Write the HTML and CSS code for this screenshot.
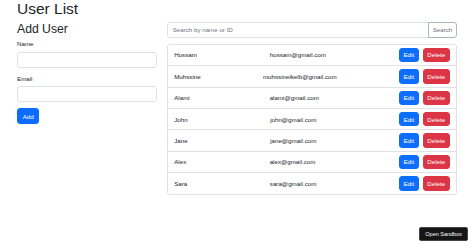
FILE: index.html
```html
<!DOCTYPE html>
<html lang="en">
<head>
    <meta charset="UTF-8">
    <meta name="viewport" content="width=device-width, initial-scale=1.0">
    <title>User List</title>
    <link rel="stylesheet" href="styles.css">
</head>
<body>
    <div class="container">
        <h1>User List</h1>
        <div class="row">
            <div class="col-left">
                <h2>Add User</h2>
                <form id="addForm">
                    <div class="field">
                        <label for="name">Name</label>
                        <input type="text" id="name" class="form-control">
                    </div>
                    <div class="field">
                        <label for="email">Email</label>
                        <input type="email" id="email" class="form-control">
                    </div>
                    <button type="submit" class="btn btn-primary">Add</button>
                </form>
            </div>
            <div class="col-right">
                <div class="input-group">
                    <input type="text" class="form-control" placeholder="Search by name or ID">
                    <button class="btn btn-outline">Search</button>
                </div>
                <ul class="list-group" id="userList"></ul>
            </div>
        </div>
    </div>
    <button class="sandbox">Open Sandbox</button>
    <script>
        const users = [
            { name: 'Hossam', email: 'hossam@gmail.com' },
            { name: 'Muhssine', email: 'muhssinelkelb@gmail.com' },
            { name: 'Alami', email: 'alami@gmail.com' },
            { name: 'John', email: 'john@gmail.com' },
            { name: 'Jane', email: 'jane@gmail.com' },
            { name: 'Alex', email: 'alex@gmail.com' },
            { name: 'Sara', email: 'sara@gmail.com' }
        ];

        function renderUsers() {
            const list = document.getElementById('userList');
            list.innerHTML = users.map(user => `
                <li class="list-group-item">
                    <span>${user.name}</span>
                    <span>${user.email}</span>
                    <div class="actions">
                        <button class="btn btn-primary">Edit</button>
                        <button class="btn btn-danger">Delete</button>
                    </div>
                </li>
            `).join('');
        }

        document.getElementById('addForm').addEventListener('submit', e => e.preventDefault());
        renderUsers();
    </script>
</body>
</html>
```

FILE: styles.css
```css
html {
    font-size: 6.2px;
}

body {
    font-family: 'Liberation Sans', Arial, sans-serif;
    color: #212529;
    background: #fff;
    margin: 0;
    font-size: 1rem;
    line-height: 1.5;
}

.container {
    padding: 0 17px;
}

h1 {
    font-size: 2.5rem;
    font-weight: 400;
    line-height: 1.2;
    margin: 0 0 0.5rem;
}

h2 {
    font-size: 1.97rem;
    font-weight: 400;
    line-height: 1.2;
    margin: 0 0 0.5rem;
}

.row {
    display: grid;
    grid-template-columns: 140px 1fr;
    gap: 10px;
}

.field {
    margin-bottom: 1rem;
}

label {
    display: block;
    margin-bottom: 0.5rem;
}

.form-control {
    display: block;
    width: 100%;
    box-sizing: border-box;
    padding: 0.375rem 0.75rem;
    font-family: inherit;
    font-size: 1rem;
    line-height: 1.5;
    color: #212529;
    border: 1px solid #dee2e6;
    border-radius: 3px;
    outline: none;
}

.form-control::placeholder {
    color: #6c757d;
}

.btn {
    font-family: inherit;
    font-size: 1rem;
    line-height: 1.5;
    padding: 0.375rem 0.75rem;
    border: 1px solid transparent;
    border-radius: 3px;
    cursor: pointer;
}

.btn-primary {
    background: #0d6efd;
    border-color: #0d6efd;
    color: #fff;
}

.btn-danger {
    background: #dc3545;
    border-color: #dc3545;
    color: #fff;
}

.input-group {
    display: flex;
    margin-bottom: 1rem;
}

.input-group .form-control {
    border-radius: 3px 0 0 3px;
}

.btn-outline {
    background: #fff;
    color: #6c757d;
    border-color: #adb5bd;
    border-radius: 0 3px 3px 0;
    padding: 0 0.6rem;
    flex-shrink: 0;
    margin-left: -1px;
}

.list-group {
    list-style: none;
    margin: 0;
    padding: 0;
    border: 1px solid #dee2e6;
    border-radius: 3px;
}

.list-group-item {
    display: flex;
    justify-content: space-between;
    align-items: center;
    padding: 3px 1rem;
    border-top: 1px solid #dee2e6;
}

.list-group-item:first-child {
    border-top: none;
}

.actions {
    display: flex;
    gap: 4px;
}

.actions .btn {
    height: 14.4px;
    padding: 0 3.6px;
}

.sandbox {
    position: fixed;
    right: 6px;
    bottom: 7px;
    height: 14px;
    padding: 0 5px;
    background: #151515;
    color: #fff;
    border: 1px solid #444;
    border-radius: 2px;
    font-family: inherit;
    font-size: 5.5px;
}
```
